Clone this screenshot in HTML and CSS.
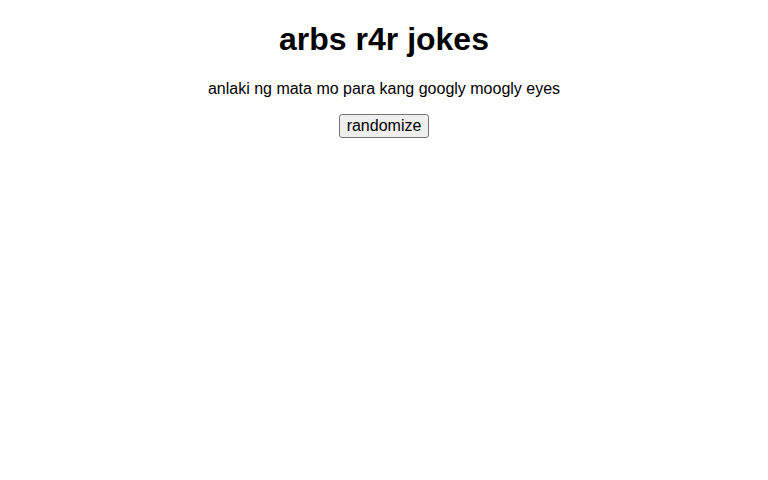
FILE: index.html
```html
<!DOCTYPE html>
<html lang="en">
<head>
    <meta charset="UTF-8">
    <meta name="viewport" content="width=device-width, initial-scale=1.0">
    <title>arbs r4r jokes</title>
    <link rel="stylesheet" href="styles.css">
</head>
<body>
    <h1>arbs r4r jokes</h1>
    <p id="joke">anlaki ng mata mo para kang googly moogly eyes</p>
    <div class="controls">
        <button onclick="randomize()">randomize</button>
    </div>

    <script>
      const jokes = [
          "anlaki ng mata mo para kang googly moogly eyes"
      ];

      // Pick a random joke and show it
      function randomize() {
          const i = Math.floor(Math.random() * jokes.length);
          document.getElementById("joke").textContent = jokes[i];
      }
    </script>
</body>
</html>
```

FILE: styles.css
```css
body {
    font-family: 'Liberation Sans', Arial, sans-serif;
    text-align: center;
    color: #000;
    background-color: #fff;
    margin: 0 8px;
}
h1 { font-size: 32px; }
p { font-size: 16px; }
.controls { margin: 16px 0; }
button {
    font-family: 'Liberation Sans', Arial, sans-serif;
    font-size: 16px;
    padding: 2px 7px;
    background-color: #efefef;
    border: 1px solid #767676;
    border-radius: 3px;
    color: #000;
    cursor: pointer;
}
button:hover { background-color: #e5e5e5; }
```
